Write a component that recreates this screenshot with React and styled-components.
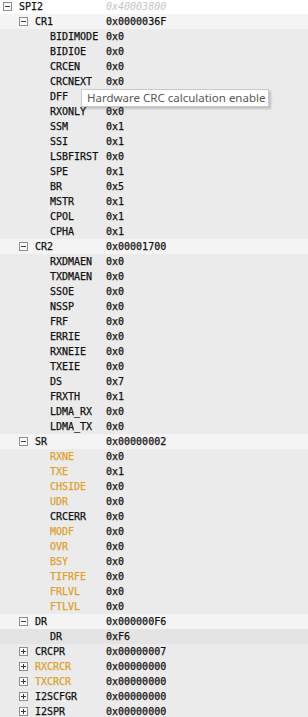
import React from "react";
import styled, { createGlobalStyle } from "styled-components";

const Global = createGlobalStyle`
  html, body { margin: 0; padding: 0; background: #ebebeb; }
  body { font-family: "DejaVu Sans Mono", "Liberation Mono", monospace; }
`;

const Viewport = styled.div`
  position: relative;
  width: 308px;
  height: 717px;
  overflow: hidden;
  background: #ebebeb;
`;

const Tree = styled.div`
  display: flex;
  flex-direction: column;
  margin-top: -1px;
`;

const Row = styled.div`
  display: grid;
  grid-template-columns: 106px 1fr;
  align-items: center;
  height: 15px;
  background: ${(p) => p.$bg};
  font-size: 10px;
  line-height: 15px;
  color: #111;
  white-space: nowrap;
  -webkit-text-stroke: 0.25px currentColor;
`;

const NameCell = styled.div`
  display: flex;
  align-items: center;
  padding-left: ${(p) => p.$indent}px;
  color: ${(p) => (p.$warn ? "#dea22a" : "#111")};
  overflow: hidden;
`;

const ValueCell = styled.div`
  color: ${(p) => (p.$muted ? "#c4c4c4" : "#111")};
  font-style: ${(p) => (p.$muted ? "italic" : "normal")};
  -webkit-text-stroke: ${(p) => (p.$muted ? "0" : "0.25px currentColor")};
`;

const Expander = styled.span`
  display: inline-flex;
  align-items: center;
  justify-content: center;
  box-sizing: border-box;
  width: 9px;
  height: 9px;
  margin-right: 7px;
  border: 1px solid #8f8f8f;
  background: #fbfbfb;
  flex: none;
`;

const Tooltip = styled.div`
  position: absolute;
  left: 81px;
  top: 89px;
  box-sizing: border-box;
  width: 188px;
  height: 18px;
  padding: 0 0 0 5px;
  background: #ffffff;
  border: 1px solid #c9c9c9;
  box-shadow: 2px 2px 2px rgba(0, 0, 0, 0.18);
  font-family: "Noto Sans", "Open Sans", sans-serif;
  font-size: 11.5px;
  line-height: 16px;
  color: #575757;
  white-space: nowrap;
`;

function Box({ open }) {
  return (
    <Expander>
      <svg width="7" height="7" viewBox="0 0 7 7">
        <rect x="1" y="3" width="5" height="1" fill="#3c3c3c" />
        {!open && <rect x="3" y="1" width="1" height="5" fill="#3c3c3c" />}
      </svg>
    </Expander>
  );
}

const cr1 = [
  ["BIDIMODE", "0x0"], ["BIDIOE", "0x0"], ["CRCEN", "0x0"], ["CRCNEXT", "0x0"],
  ["DFF", "0x0"], ["RXONLY", "0x0"], ["SSM", "0x1"], ["SSI", "0x1"],
  ["LSBFIRST", "0x0"], ["SPE", "0x1"], ["BR", "0x5"], ["MSTR", "0x1"],
  ["CPOL", "0x1"], ["CPHA", "0x1"],
];
const cr2 = [
  ["RXDMAEN", "0x0"], ["TXDMAEN", "0x0"], ["SSOE", "0x0"], ["NSSP", "0x0"],
  ["FRF", "0x0"], ["ERRIE", "0x0"], ["RXNEIE", "0x0"], ["TXEIE", "0x0"],
  ["DS", "0x7"], ["FRXTH", "0x1"], ["LDMA_RX", "0x0"], ["LDMA_TX", "0x0"],
];
const sr = [
  ["RXNE", "0x0", true], ["TXE", "0x1", true], ["CHSIDE", "0x0", true],
  ["UDR", "0x0", true], ["CRCERR", "0x0", false], ["MODF", "0x0", true],
  ["OVR", "0x0", true], ["BSY", "0x0", true], ["TIFRFE", "0x0", true],
  ["FRLVL", "0x0", true], ["FTLVL", "0x0", true],
];
const collapsed = [
  ["CRCPR", "0x00000007", false], ["RXCRCR", "0x00000000", true],
  ["TXCRCR", "0x00000000", true], ["I2SCFGR", "0x00000000", false],
  ["I2SPR", "0x00000000", false],
];

function Header({ name, value, open, warn, bg = "#f4f4f4" }) {
  return (
    <Row $bg={bg}>
      <NameCell $indent={19} $warn={warn}>
        <Box open={open} />
        {name}
      </NameCell>
      <ValueCell>{value}</ValueCell>
    </Row>
  );
}

function Field({ name, value, warn, bg = "#ebebeb" }) {
  return (
    <Row $bg={bg}>
      <NameCell $indent={50} $warn={warn}>{name}</NameCell>
      <ValueCell>{value}</ValueCell>
    </Row>
  );
}

export default function App() {
  return (
    <Viewport>
      <Global />
      <Tree>
        <Row $bg="#ffffff">
          <NameCell $indent={3}>
            <Box open />
            SPI2
          </NameCell>
          <ValueCell $muted>0x40003800</ValueCell>
        </Row>
        <Header name="CR1" value="0x0000036F" open />
        {cr1.map(([n, v]) => <Field key={"a" + n} name={n} value={v} />)}
        <Header name="CR2" value="0x00001700" open />
        {cr2.map(([n, v]) => <Field key={"b" + n} name={n} value={v} />)}
        <Header name="SR" value="0x00000002" open />
        {sr.map(([n, v, w]) => <Field key={"c" + n} name={n} value={v} warn={w} />)}
        <Header name="DR" value="0x000000F6" open />
        <Field name="DR" value="0xF6" bg="#e4e4e4" />
        {collapsed.map(([n, v, w]) => (
          <Header key={"d" + n} name={n} value={v} warn={w} bg="#ebebeb" />
        ))}
      </Tree>
      <Tooltip>Hardware CRC calculation enable</Tooltip>
    </Viewport>
  );
}
